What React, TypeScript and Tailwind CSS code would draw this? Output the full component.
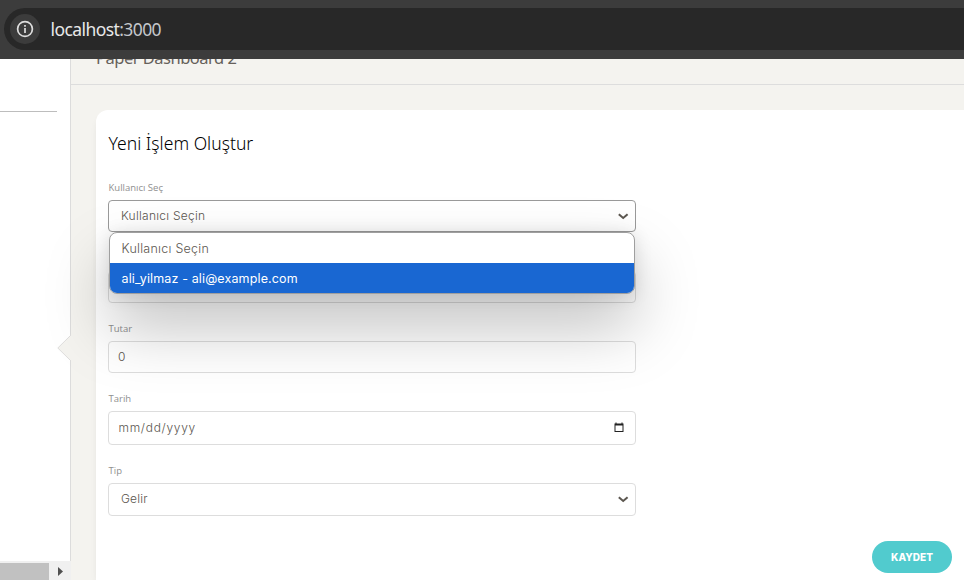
import { useState } from "react";
import type { ReactNode } from "react";
import { clsx } from "clsx";

const users = [
  { id: "", label: "Kullanıcı Seçin" },
  { id: "1", label: "ali_yilmaz - ali@example.com" },
];

function Chevron() {
  return (
    <svg className="h-[14px] w-[14px] shrink-0" viewBox="0 0 14 14" fill="none" stroke="#5c5750" strokeWidth="2">
      <path d="M2.8 5.2 L7.2 9 L11.6 5.2" />
    </svg>
  );
}

function CalendarIcon() {
  return (
    <svg className="-mt-[2px] h-[11px] w-[10px] shrink-0" viewBox="0 0 10 11" fill="none">
      <path d="M1.5 0.5h1v1h5v-1h1v1H9.5v8.5h-9V1.5h1z" fill="#222" />
      <rect x="1.5" y="3.5" width="7" height="5.5" fill="#fff" />
    </svg>
  );
}

function Field({ label, className, children }: { label?: string; className?: string; children: ReactNode }) {
  return (
    <div className={clsx("relative w-[528px]", className)}>
      <label className="block h-[19px] pl-[0.5px] font-['Open_Sans',sans-serif] text-[9.5px] leading-[14px] text-[#8f8f8f]">{label}</label>
      {children}
    </div>
  );
}

function AddressBar() {
  return (
    <div className="relative z-20 h-[59px] bg-[#3c3c3c] pt-2 pl-1">
      <div className="flex h-[42px] items-center rounded-l-full bg-[#282828] pl-1.5">
        <div className="flex h-[30px] w-[30px] items-center justify-center rounded-full bg-[#3c3c3c]">
          <svg className="h-[18px] w-[18px]" viewBox="0 0 18 18" fill="none" stroke="#dedede" strokeWidth="1.7">
            <circle cx="9" cy="9" r="7.4" />
            <path d="M9 8v5M9 5v1.7" />
          </svg>
        </div>
        <span className="ml-[10.5px] font-['Noto_Sans',sans-serif] text-[17.5px] tracking-[-0.58px] text-[#e8e8e8]">
          localhost<span className="text-[#c4c7cb]">:3000</span>
        </span>
      </div>
    </div>
  );
}

function Sidebar() {
  return (
    <aside className="relative flex w-[71px] shrink-0 flex-col bg-white">
      <div className="flex-1 border-r border-[#dcdcdc] pt-[52px]">
        <div className="h-px w-[57px] bg-[#bdbdbd]" />
      </div>
      <svg className="absolute top-[275px] right-0 h-[28px] w-[14px]" viewBox="0 0 14 28">
        <path d="M14 1 L.8 14 L14 27" fill="#f4f3ef" stroke="#dedddc" />
      </svg>
      <div className="flex h-[19px] items-center bg-[#f0f0f0]">
        <div className="mt-[2px] h-[17px] w-[49px] bg-[#c1c1c1]" />
        <svg className="mt-[2px] ml-[9px] h-[9px] w-[5px]" viewBox="0 0 5 9">
          <path d="M0 0 L5 4.5 L0 9z" fill="#505050" />
        </svg>
      </div>
    </aside>
  );
}

const control = "flex items-center rounded-[4px] border bg-white font-['Inter',sans-serif] text-[12px] font-light text-[#5b564f]";

export default function App() {
  const [active, setActive] = useState("1");

  return (
    <div className="flex h-[580px] w-[964px] flex-col overflow-hidden bg-[#f4f3ef]">
      <AddressBar />
      <div className="flex min-h-0 flex-1">
        <Sidebar />
        <main className="flex min-w-0 flex-1 flex-col">
          <nav className="h-[26px] shrink-0 border-b border-[#dddddd] pl-[25px]">
            <span className="-mt-[14px] block font-['Noto_Sans',sans-serif] text-[16.5px] leading-[25px] tracking-[-0.5px] text-[#66615b]">
              Paper Dashboard 2
            </span>
          </nav>
          <section className="mt-[25px] ml-[25px] flex-1 rounded-tl-[12px] bg-white pt-5 pl-3 shadow-[0_6px_10px_-4px_rgba(0,0,0,0.15)]">
            <h5 className="h-[51px] pl-[0.5px] font-['Noto_Sans',sans-serif] text-[17.5px] leading-[27px] font-light tracking-[0.03px] text-black">Yeni İşlem Oluştur</h5>

            <Field label="Kullanıcı Seç" className="z-10">
              <div className={clsx(control, "h-8 justify-between border-[#9a9a9a] pr-[5px] pl-3 tracking-[0.26px]")}>
                <span>Kullanıcı Seçin</span>
                <Chevron />
              </div>
              <ul className="absolute top-[51px] left-[1px] w-[526px] overflow-hidden rounded-[8px] border border-[#9f9f9f] bg-white font-['Inter',sans-serif] text-[12.5px] shadow-[0_32px_64px_rgba(0,0,0,0.26),0_2px_18px_rgba(0,0,0,0.12)]">
                {users.map((u) => (
                  <li
                    key={u.id}
                    onMouseEnter={() => setActive(u.id)}
                    className={clsx(
                      "flex h-[30px] items-center pt-[2px] pl-[11.5px]",
                      active === u.id ? "bg-[#1967d2] tracking-[0.13px] text-white" : "font-light tracking-[0.25px] text-[#5b564f]",
                    )}
                  >
                    {u.label}
                  </li>
                ))}
              </ul>
            </Field>

            {/* sits under the open option list */}
            <Field className="mt-[20px]">
              <div className={clsx(control, "h-8 border-[#dddddd]")} />
            </Field>

            <Field label="Tutar" className="mt-[19px]">
              <div className={clsx(control, "h-8 border-[#dddddd] pl-[9px]")}>0</div>
            </Field>

            <Field label="Tarih" className="mt-[19px]">
              <div className={clsx(control, "h-[34px] justify-between border-[#dddddd] pr-[11px] pl-[9.5px]")}>
                <span className="tracking-[0.7px]">mm/dd/yyyy</span>
                <CalendarIcon />
              </div>
            </Field>

            <Field label="Tip" className="mt-[19px]">
              <div className={clsx(control, "h-[33px] justify-between border-[#dddddd] pr-[5px] pb-px pl-3 tracking-[0.2px]")}>
                <span>Gelir</span>
                <Chevron />
              </div>
            </Field>

            <div className="mt-[25px] flex justify-end pr-3">
              <button className="h-8 w-20 rounded-full bg-[#51cbce] font-['Inter',sans-serif] text-[10px] font-extrabold text-white">KAYDET</button>
            </div>
          </section>
        </main>
      </div>
    </div>
  );
}
